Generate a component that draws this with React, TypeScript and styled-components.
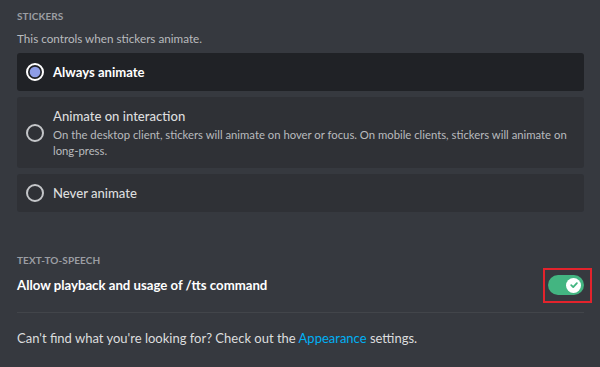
import React from "react";
import styled, { createGlobalStyle } from "styled-components";

const Global = createGlobalStyle`
  html, body { margin: 0; padding: 0; background: #36393f; }
  body { font-family: Lato, "Noto Sans", sans-serif; -webkit-font-smoothing: antialiased; }
`;

const Page = styled.div`
  width: 600px;
  height: 367px;
  box-sizing: border-box;
  padding: 8px 16px 0 17px;
  background: #36393f;
  display: flex;
  flex-direction: column;
`;

const SectionHeader = styled.h5<{ $top?: number }>`
  margin: ${(p) => p.$top ?? 0}px 0 0;
  font-size: 10px;
  line-height: 16px;
  font-weight: 700;
  letter-spacing: 0.1px;
  text-transform: uppercase;
  color: #9b9ea3;
`;

const Description = styled.div`
  margin-top: 4px;
  font-size: 11.7px;
  line-height: 20px;
  color: #b9bbbe;
`;

const RadioGroup = styled.div`
  margin-top: 5px;
  display: flex;
  flex-direction: column;
  gap: 6px;
`;

const Option = styled.div<{ $selected?: boolean }>`
  display: flex;
  align-items: center;
  gap: 9px;
  padding: 9px 8px 9px 9px;
  border-radius: 3px;
  background: ${(p) => (p.$selected ? "#202226" : "#2f3136")};
`;

const OptionText = styled.div`
  display: flex;
  flex-direction: column;
`;

const OptionLabel = styled.div<{ $selected?: boolean }>`
  font-size: 13.1px;
  line-height: 20px;
  font-weight: ${(p) => (p.$selected ? 700 : 500)};
  color: ${(p) => (p.$selected ? "#ffffff" : "#dcddde")};
`;

const OptionDesc = styled.div`
  margin-top: 1px;
  font-size: 11.3px;
  line-height: 16px;
  color: #b9bbbe;
`;

const RadioSvg = styled.svg`
  flex: 0 0 auto;
  width: 18px;
  height: 18px;
`;

const Radio = ({ selected }: { selected?: boolean }) => (
  <RadioSvg viewBox="0 0 18 18">
    <circle cx="9" cy="9" r="8" fill="none" stroke={selected ? "#ffffff" : "#c4c6c9"} strokeWidth="2" />
    {selected && <circle cx="9" cy="9" r="5.3" fill="#8e9de6" />}
  </RadioSvg>
);

const SettingRow = styled.div`
  margin-top: 6px;
  display: flex;
  align-items: center;
  justify-content: space-between;
`;

const SettingTitle = styled.div`
  font-size: 13.2px;
  line-height: 20px;
  font-weight: 700;
  color: #ffffff;
`;

const SwitchTrack = styled.div`
  position: relative;
  width: 36px;
  height: 20px;
  border-radius: 10px;
  background: #43b581;
  margin-top: 1px;

  &::after {
    content: "";
    position: absolute;
    top: -7px;
    bottom: -8px;
    left: -5px;
    right: -8px;
    border: 2px solid #e3232c;
    pointer-events: none;
  }
`;

const SwitchKnob = styled.div`
  position: absolute;
  right: 3px;
  top: 2.5px;
  width: 15px;
  height: 15px;
  border-radius: 50%;
  background: #ffffff;
  display: flex;
  align-items: center;
  justify-content: center;
`;

const Divider = styled.div`
  margin-top: 17px;
  height: 1px;
  background: #42454a;
`;

const Footer = styled.div`
  margin-top: 15px;
  font-size: 13px;
  line-height: 20px;
  color: #dcddde;
`;

const Link = styled.a`
  color: #00b0f4;
  text-decoration: none;
  cursor: pointer;
`;

export default function App() {
  return (
    <>
      <Global />
      <Page>
        <SectionHeader>Stickers</SectionHeader>
        <Description>This controls when stickers animate.</Description>
        <RadioGroup>
          <Option $selected>
            <Radio selected />
            <OptionText>
              <OptionLabel $selected>Always animate</OptionLabel>
            </OptionText>
          </Option>
          <Option>
            <Radio />
            <OptionText>
              <OptionLabel>Animate on interaction</OptionLabel>
              <OptionDesc>
                On the desktop client, stickers will animate on hover or focus. On mobile clients, stickers will animate on long-press.
              </OptionDesc>
            </OptionText>
          </Option>
          <Option>
            <Radio />
            <OptionText>
              <OptionLabel>Never animate</OptionLabel>
            </OptionText>
          </Option>
        </RadioGroup>
        <SectionHeader $top={40}>Text-to-speech</SectionHeader>
        <SettingRow>
          <SettingTitle>Allow playback and usage of /tts command</SettingTitle>
          <SwitchTrack>
            <SwitchKnob>
              <svg width="10" height="10" viewBox="0 0 10 10">
                <path d="M2.2 5.2 L4.2 7.1 L7.9 3.1" fill="none" stroke="#43b581" strokeWidth="1.8" strokeLinecap="round" strokeLinejoin="round" />
              </svg>
            </SwitchKnob>
          </SwitchTrack>
        </SettingRow>
        <Divider />
        <Footer>
          Can't find what you're looking for? Check out the <Link>Appearance</Link> settings.
        </Footer>
      </Page>
    </>
  );
}
